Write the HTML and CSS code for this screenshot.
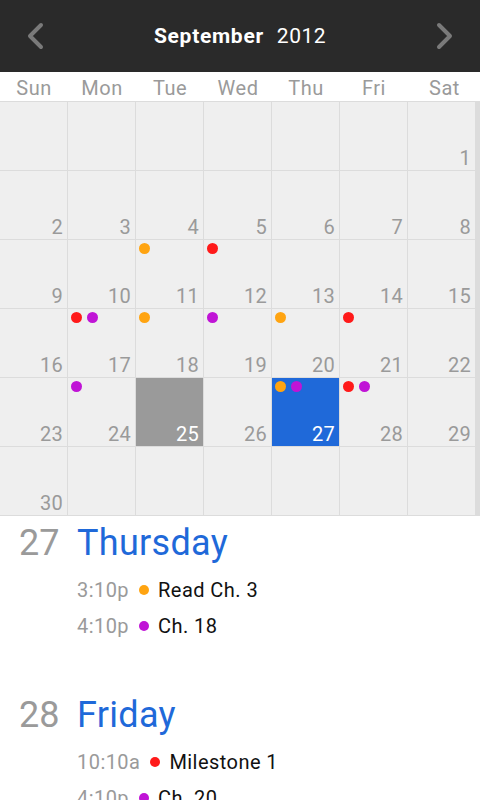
FILE: index.html
```html
<!DOCTYPE html>
<html>
<head>
<meta charset="utf-8">
<link rel="stylesheet" href="styles.css">
</head>
<body>
<div class="app">
  <header class="topbar">
    <svg class="chev" width="24" height="32" viewBox="0 0 24 32"><polyline points="17,5 6,16 17,27" fill="none" stroke="#7a7a7a" stroke-width="4" stroke-linecap="round" stroke-linejoin="round"/></svg>
    <div class="title"><span class="month">September</span><span class="year">2012</span></div>
    <svg class="chev" width="24" height="32" viewBox="0 0 24 32"><polyline points="7,5 18,16 7,27" fill="none" stroke="#7a7a7a" stroke-width="4" stroke-linecap="round" stroke-linejoin="round"/></svg>
  </header>
  <div class="weekdays">
    <span>Sun</span><span>Mon</span><span>Tue</span><span>Wed</span><span>Thu</span><span>Fri</span><span>Sat</span>
  </div>
  <div class="grid">
    <div class="cell"></div><div class="cell"></div><div class="cell"></div><div class="cell"></div><div class="cell"></div><div class="cell"></div>
    <div class="cell"><div class="dots"></div><span class="num">1</span></div>

    <div class="cell"><div class="dots"></div><span class="num">2</span></div>
    <div class="cell"><div class="dots"></div><span class="num">3</span></div>
    <div class="cell"><div class="dots"></div><span class="num">4</span></div>
    <div class="cell"><div class="dots"></div><span class="num">5</span></div>
    <div class="cell"><div class="dots"></div><span class="num">6</span></div>
    <div class="cell"><div class="dots"></div><span class="num">7</span></div>
    <div class="cell"><div class="dots"></div><span class="num">8</span></div>

    <div class="cell"><div class="dots"></div><span class="num">9</span></div>
    <div class="cell"><div class="dots"></div><span class="num">10</span></div>
    <div class="cell"><div class="dots"><i class="dot orange"></i></div><span class="num">11</span></div>
    <div class="cell"><div class="dots"><i class="dot red"></i></div><span class="num">12</span></div>
    <div class="cell"><div class="dots"></div><span class="num">13</span></div>
    <div class="cell"><div class="dots"></div><span class="num">14</span></div>
    <div class="cell"><div class="dots"></div><span class="num">15</span></div>

    <div class="cell"><div class="dots"></div><span class="num">16</span></div>
    <div class="cell"><div class="dots"><i class="dot red"></i><i class="dot purple"></i></div><span class="num">17</span></div>
    <div class="cell"><div class="dots"><i class="dot orange"></i></div><span class="num">18</span></div>
    <div class="cell"><div class="dots"><i class="dot purple"></i></div><span class="num">19</span></div>
    <div class="cell"><div class="dots"><i class="dot orange"></i></div><span class="num">20</span></div>
    <div class="cell"><div class="dots"><i class="dot red"></i></div><span class="num">21</span></div>
    <div class="cell"><div class="dots"></div><span class="num">22</span></div>

    <div class="cell"><div class="dots"></div><span class="num">23</span></div>
    <div class="cell"><div class="dots"><i class="dot purple"></i></div><span class="num">24</span></div>
    <div class="cell today"><div class="dots"></div><span class="num">25</span></div>
    <div class="cell"><div class="dots"></div><span class="num">26</span></div>
    <div class="cell selected"><div class="dots"><i class="dot orange"></i><i class="dot purple"></i></div><span class="num">27</span></div>
    <div class="cell"><div class="dots"><i class="dot red"></i><i class="dot purple"></i></div><span class="num">28</span></div>
    <div class="cell"><div class="dots"></div><span class="num">29</span></div>

    <div class="cell"><div class="dots"></div><span class="num">30</span></div>
    <div class="cell"></div><div class="cell"></div><div class="cell"></div><div class="cell"></div><div class="cell"></div><div class="cell"></div>
  </div>
  <div class="agenda">
    <section class="day">
      <div class="day-head"><span class="day-num">27</span><span class="day-name">Thursday</span></div>
      <div class="event"><span class="time">3:10p</span><i class="edot orange"></i><span class="etitle">Read Ch. 3</span></div>
      <div class="event"><span class="time">4:10p</span><i class="edot purple"></i><span class="etitle">Ch. 18</span></div>
    </section>
    <section class="day">
      <div class="day-head"><span class="day-num">28</span><span class="day-name">Friday</span></div>
      <div class="event"><span class="time">10:10a</span><i class="edot red"></i><span class="etitle">Milestone 1</span></div>
      <div class="event"><span class="time">4:10p</span><i class="edot purple"></i><span class="etitle">Ch. 20</span></div>
    </section>
  </div>
</div>
</body>
</html>
```
FILE: styles.css
```css
* { box-sizing: border-box; margin: 0; padding: 0; }
html, body { width: 480px; height: 800px; overflow: hidden; background: #fff; }
body { font-family: Roboto, "Noto Sans", sans-serif; }
.app { width: 480px; height: 800px; overflow: hidden; }

.topbar {
  height: 72px;
  background: #2a2a2a;
  display: flex;
  align-items: center;
  padding: 0 24px;
}
.chev { display: block; flex: none; }
.title {
  flex: 1;
  display: flex;
  justify-content: center;
  align-items: baseline;
  gap: 13px;
  color: #fff;
  font-size: 21px;
  letter-spacing: 0.5px;
  padding-bottom: 1px;
}
.month { font-weight: 700; letter-spacing: 0.7px; }
.year { font-weight: 400; }

.weekdays {
  height: 29px;
  display: grid;
  grid-template-columns: repeat(7, 68px);
  align-items: center;
  color: #9a9a9a;
  font-size: 20px;
  letter-spacing: 0.5px;
  line-height: 29px;
  padding-top: 2px;
}
.weekdays span { text-align: center; }
.weekdays span:last-child { padding-left: 5px; }

.grid {
  display: grid;
  grid-template-columns: repeat(7, 67px);
  grid-auto-rows: 68px;
  gap: 1px;
  padding: 1px 0;
  background: #dcdcdc;
  width: 480px;
}
.cell {
  background: #efefef;
  display: flex;
  flex-direction: column;
  justify-content: space-between;
  padding: 3px 4px 2px 3px;
}
.dots { display: flex; gap: 5px; height: 11px; }
.dot { display: block; width: 11px; height: 11px; border-radius: 50%; }
.num {
  align-self: flex-end;
  font-size: 20px;
  line-height: 20px;
  letter-spacing: 0.3px;
  color: #9a9a9a;
}
.cell.today { background: #9a9a9a; }
.cell.selected { background: #1f69d9; }
.cell.today .num, .cell.selected .num { color: #fff; }

.orange { background: #ffa411; }
.red { background: #ff1a1a; }
.purple { background: #c014d6; }

.agenda { padding-top: 5px; }
.day + .day { margin-top: 49px; }
.day-head {
  display: flex;
  align-items: baseline;
  height: 44px;
  line-height: 44px;
  font-size: 36px;
  margin-bottom: 7px;
}
.day-num { width: 77px; padding-left: 19px; color: #9a9a9a; }
.day-name { color: #1f69d9; letter-spacing: 0.3px; }
.event {
  display: flex;
  align-items: center;
  height: 36px;
  padding-left: 77px;
  font-size: 20px;
  letter-spacing: 0.45px;
}
.time { color: #9a9a9a; }
.edot { display: block; width: 10px; height: 10px; border-radius: 50%; margin: 0 9px 0 10px; }
.etitle { color: #111; }
```
